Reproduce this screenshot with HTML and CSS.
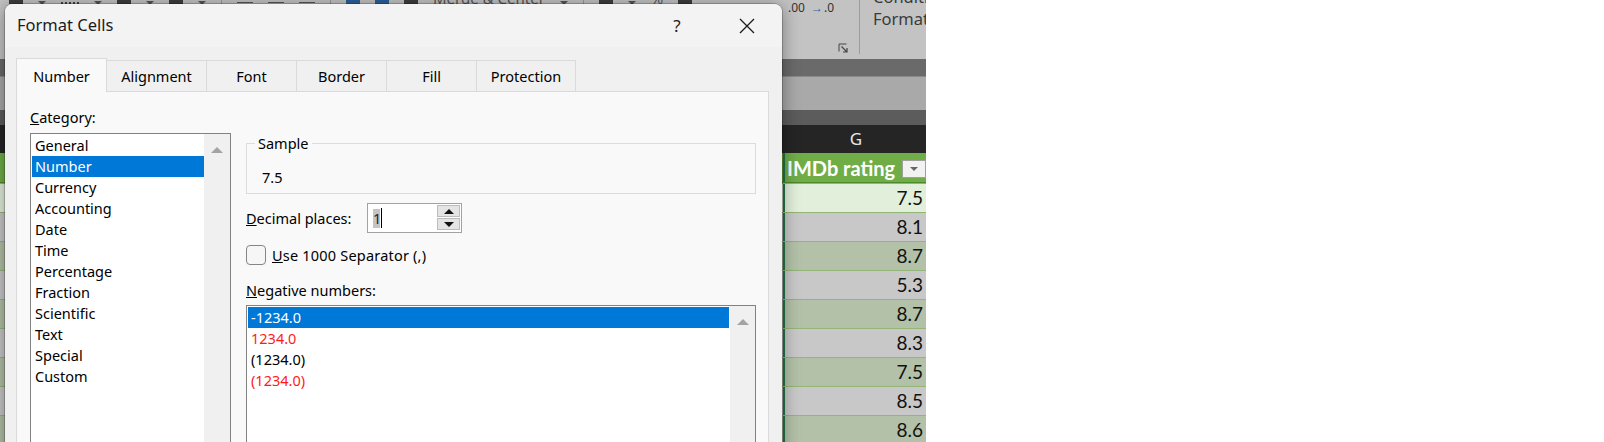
FILE: index.html
```html
<!DOCTYPE html>
<html lang="en">
<head>
    <meta charset="UTF-8">
    <meta name="viewport" content="width=device-width, initial-scale=1.0">
    <title>Format Cells</title>
    <link rel="stylesheet" href="styles.css">
</head>
<body>
    <div class="screen">
        <!-- excel window behind the dialog -->
        <div class="excel">
            <div class="ribbon">
                <div class="ribbon-strip">
                    <i class="bit"></i><i class="tri"></i>
                    <i class="bit dotted"></i><i class="tri"></i>
                    <i class="bit"></i><i class="tri"></i>
                    <i class="bit"></i><i class="tri"></i>
                    <i class="vsep"></i>
                    <i class="bit thin"></i><i class="bit thin"></i><i class="bit thin"></i>
                    <i class="vsep"></i>
                    <i class="bit blue"></i><i class="bit blue"></i>
                    <i class="bit"></i>
                    <span class="strip-text">Merge &amp; Center</span><i class="tri"></i>
                    <i class="vsep"></i>
                    <i class="bit"></i><i class="tri"></i>
                    <span class="strip-text">%</span>
                    <i class="bit"></i>
                </div>
                <div class="rb-number">
                    <div class="rb-dec"><span>.00</span><span class="rb-arrow">&#8594;</span><span>.0</span></div>
                    <svg class="rb-launcher" width="10" height="10" viewBox="0 0 10 10">
                        <path d="M1 8.5V1h7.5" fill="none" stroke="#444" stroke-width="1"/>
                        <path d="M3.5 3.5l5 5M9 5v4H5" fill="none" stroke="#444" stroke-width="1.2"/>
                    </svg>
                </div>
                <div class="rb-sep"></div>
                <div class="rb-cond">
                    <span>Conditional</span>
                    <span>Formatting</span>
                </div>
            </div>
            <div class="bar-dark"></div>
            <div class="formula-bar"></div>
            <div class="bar-mid"></div>
            <div class="col-heads">
                <span class="col-a"></span>
                <span class="col-g">G</span>
            </div>
            <div class="sheet">
                <div class="row head"><span class="a"></span><span class="g">IMDb rating<b class="filter"></b></span></div>
                <div class="row band active"><span class="a"></span><span class="g">7.5</span></div>
                <div class="row"><span class="a"></span><span class="g">8.1</span></div>
                <div class="row band"><span class="a"></span><span class="g">8.7</span></div>
                <div class="row"><span class="a"></span><span class="g">5.3</span></div>
                <div class="row band"><span class="a"></span><span class="g">8.7</span></div>
                <div class="row"><span class="a"></span><span class="g">8.3</span></div>
                <div class="row band"><span class="a"></span><span class="g">7.5</span></div>
                <div class="row"><span class="a"></span><span class="g">8.5</span></div>
                <div class="row band"><span class="a"></span><span class="g">8.6</span></div>
            </div>
        </div>

        <!-- Format Cells dialog -->
        <div class="dialog">
            <div class="titlebar">
                <span class="title">Format Cells</span>
                <span class="tb-btn help">?</span>
                <span class="tb-btn">
                    <svg width="16" height="16" viewBox="0 0 16 16">
                        <path d="M1 1L15 15M15 1L1 15" stroke="#1a1a1a" stroke-width="1.3" fill="none"/>
                    </svg>
                </span>
            </div>
            <div class="dlg-body">
                <div class="tabs">
                    <span class="tab tab-number active">Number</span>
                    <span class="tab tab-align">Alignment</span>
                    <span class="tab">Font</span>
                    <span class="tab">Border</span>
                    <span class="tab">Fill</span>
                    <span class="tab tab-protect">Protection</span>
                </div>
                <div class="panel">
                    <div class="col-left">
                        <div class="label"><u>C</u>ategory:</div>
                        <div class="listbox cat-list">
                            <ul class="items">
                                <li>General</li>
                                <li class="sel">Number</li>
                                <li>Currency</li>
                                <li>Accounting</li>
                                <li>Date</li>
                                <li>Time</li>
                                <li>Percentage</li>
                                <li>Fraction</li>
                                <li>Scientific</li>
                                <li>Text</li>
                                <li>Special</li>
                                <li>Custom</li>
                            </ul>
                            <div class="vscroll"><span class="arrow-up"></span></div>
                        </div>
                    </div>
                    <div class="col-right">
                        <fieldset class="sample">
                            <legend>Sample</legend>
                            <div class="sample-val">7.5</div>
                        </fieldset>
                        <div class="field-row">
                            <span class="dec-label"><u>D</u>ecimal places:</span>
                            <div class="spin">
                                <span class="spin-text"><span class="spin-sel">1</span><span class="caret"></span></span>
                                <span class="spin-btns">
                                    <span class="spin-btn"><i class="tri-up"></i></span>
                                    <span class="spin-btn"><i class="tri-down"></i></span>
                                </span>
                            </div>
                        </div>
                        <div class="check-row">
                            <span class="checkbox"></span>
                            <span class="check-label"><u>U</u>se 1000 Separator (,)</span>
                        </div>
                        <div class="label neg-label"><u>N</u>egative numbers:</div>
                        <div class="listbox neg-list">
                            <ul class="items">
                                <li class="sel">-1234.0</li>
                                <li class="red">1234.0</li>
                                <li>(1234.0)</li>
                                <li class="red">(1234.0)</li>
                            </ul>
                            <div class="vscroll"><span class="arrow-up"></span></div>
                        </div>
                    </div>
                </div>
            </div>
        </div>
    </div>
</body>
</html>
```

FILE: styles.css
```css
body {
    margin: 0;
    background-color: #fff;
    font-family: "Noto Sans", "Open Sans", sans-serif;
}
.screen {
    position: relative;
    width: 926px;
    height: 442px;
    overflow: hidden;
}
.excel {
    width: 926px;
}

/* ribbon */
.ribbon {
    display: flex;
    height: 59px;
    background-color: #c3c3c3;
    color: #3a3a3a;
    overflow: hidden;
}
.ribbon-strip {
    flex: 0 0 782px;
    display: flex;
    align-items: flex-start;
    gap: 15px;
    padding-left: 9px;
    box-sizing: border-box;
    overflow: hidden;
}
.bit {
    display: block;
    width: 14px;
    height: 4px;
    background-color: #3d3d3d;
}
.bit.dotted {
    width: 18px;
    background-color: transparent;
    border-bottom: 2px dotted #444;
    height: 2px;
}
.bit.thin {
    width: 16px;
    height: 1px;
    margin-top: 2px;
    background-color: #555;
}
.bit.blue {
    background-color: #2e5f9a;
}
.tri {
    display: block;
    width: 0;
    height: 0;
    margin-top: 1px;
    border-left: 4px solid transparent;
    border-right: 4px solid transparent;
    border-top: 4px solid #555;
}
.vsep {
    display: block;
    width: 1px;
    height: 6px;
    background-color: #999;
}
.strip-text {
    font-size: 15px;
    line-height: 15px;
    margin-top: -9px;
    color: #555;
    white-space: nowrap;
}
.rb-number {
    flex: 0 0 77px;
    display: flex;
    flex-direction: column;
    padding: 0 11px 0 6px;
    box-sizing: border-box;
}
.rb-dec {
    display: flex;
    gap: 6px;
    margin-top: 1px;
    font-size: 12px;
    line-height: 14px;
    color: #333;
}
.rb-arrow {
    color: #2c62a6;
    font-weight: bold;
    margin-right: -5px;
}
.rb-launcher {
    align-self: flex-end;
    margin-top: auto;
    margin-bottom: 6px;
}
.rb-sep {
    flex: 0 0 1px;
    height: 54px;
    background-color: #9b9b9b;
}
.rb-cond {
    display: flex;
    flex-direction: column;
    padding-left: 13px;
    margin-top: -14px;
    font-size: 16.5px;
    line-height: 22px;
    white-space: nowrap;
    color: #3a3a3a;
}

/* bars between ribbon and grid */
.bar-dark {
    height: 17px;
    background-color: #6a6a6a;
}
.formula-bar {
    height: 34px;
    background-color: #a9a9a9;
    border-top: 1px solid #8a8a8a;
    box-sizing: border-box;
}
.bar-mid {
    height: 15px;
    background-color: #5c5c5c;
}
.col-heads {
    display: grid;
    grid-template-columns: 783px 146px;
    height: 28px;
    background-color: #252525;
}
.col-g {
    text-align: center;
    color: #e8e8e8;
    font-size: 17px;
    line-height: 28px;
}

/* sheet rows */
.sheet {
    font-family: Lato, "Liberation Sans", sans-serif;
}
.row {
    display: grid;
    grid-template-columns: 783px 146px;
    height: 29px;
    box-sizing: border-box;
    border-top: 1px solid #93b578;
    background-color: #c8c8c8;
    color: #111;
    font-size: 19px;
}
.row.band {
    background-color: #b3c1a8;
}
.row.active {
    background-color: #e2efda;
}
.row .g {
    border-left: 2px solid #217346;
    padding-right: 6px;
    text-align: right;
    line-height: 28px;
}
.row.head {
    height: 30px;
    border-top: none;
    border-bottom: 1px solid #4f8a2f;
    background-color: #70ad47;
    color: #fff;
}
.row.head .g {
    display: flex;
    align-items: center;
    padding: 0 3px 0 2px;
    font-weight: bold;
    font-size: 20px;
}
.filter {
    margin-left: auto;
    width: 24px;
    height: 18px;
    margin-top: 2px;
    box-sizing: border-box;
    background-color: #f2f2f2;
    border: 1px solid #a0a0a0;
    display: flex;
    align-items: center;
    justify-content: center;
}
.filter::after {
    content: "";
    border-left: 4px solid transparent;
    border-right: 4px solid transparent;
    border-top: 4px solid #666;
}

/* dialog */
.dialog {
    position: absolute;
    left: 5px;
    top: 4px;
    width: 777px;
    height: 470px;
    background-color: #f0f0f0;
    border-radius: 8px 8px 0 0;
    box-shadow: 0 0 0 1px rgba(0,0,0,0.2), 0 2px 18px rgba(0,0,0,0.4);
    color: #000;
    font-size: 14.5px;
}
.titlebar {
    display: flex;
    align-items: center;
    height: 43px;
    background-color: #f3f3f3;
    border-radius: 8px 8px 0 0;
}
.title {
    flex: 1;
    padding-left: 12px;
    padding-bottom: 2px;
    font-size: 16.5px;
    color: #1b1b1b;
}
.tb-btn {
    width: 70px;
    height: 43px;
    display: flex;
    align-items: center;
    justify-content: center;
}
.help {
    font-size: 17px;
    color: #1b1b1b;
}
.dlg-body {
    padding: 11px 13px 0 11px;
}
.tabs {
    display: flex;
    align-items: flex-end;
    height: 33px;
}
.tab {
    width: 91px;
    height: 31px;
    margin-left: -1px;
    box-sizing: border-box;
    display: flex;
    align-items: center;
    justify-content: center;
    background-color: #f0f0f0;
    border: 1px solid #dadada;
    border-bottom: none;
}
.tab-number {
    width: 91px;
    margin-left: 0;
}
.tab-align {
    width: 101px;
}
.tab-protect {
    width: 100px;
}
.tab.active {
    height: 34px;
    margin-bottom: -1px;
    background-color: #f9f9f9;
    position: relative;
    z-index: 1;
}
.panel {
    display: grid;
    grid-template-columns: 201px 510px;
    gap: 15px;
    height: 360px;
    padding: 15px 12px 0 13px;
    background-color: #f9f9f9;
    border: 1px solid #dadada;
}
.label {
    line-height: 20px;
}
.listbox {
    display: grid;
    grid-template-columns: 1fr 26px;
    padding: 1px 0 0 1px;
    background-color: #fff;
    border: 1px solid #828282;
}
.cat-list {
    margin-top: 6px;
    height: 320px;
}
.items {
    list-style: none;
    margin: 0;
    padding: 0;
}
.items li {
    height: 21px;
    line-height: 21px;
    padding-left: 3px;
}
.items li.sel {
    background-color: #0078d7;
    color: #fff;
}
.items li.red {
    color: #ff1a1a;
}
.vscroll {
    background-color: #f0f0f0;
    display: flex;
    justify-content: center;
    margin-top: -1px;
}
.arrow-up {
    margin-top: 13px;
    width: 0;
    height: 0;
    border-left: 6px solid transparent;
    border-right: 6px solid transparent;
    border-bottom: 6px solid #a3a3a3;
}

/* right column */
.sample {
    margin: 26px 0 0;
    padding: 0 0 6px 8px;
    min-width: 0;
    border: 1px solid #dcdcdc;
}
.sample legend {
    padding: 0 3px;
    line-height: 20px;
}
.sample-val {
    margin: 14px 0 0 7px;
    line-height: 20px;
}
.field-row {
    display: flex;
    align-items: center;
    height: 30px;
    margin-top: 9px;
}
.dec-label {
    width: 121px;
}
.spin {
    display: flex;
    width: 95px;
    height: 30px;
    box-sizing: border-box;
    border: 1px solid #a2a2a2;
    background-color: #fff;
}
.spin-text {
    flex: 1;
    display: flex;
    align-items: center;
    padding-left: 5px;
}
.spin-sel {
    background-color: #c4c4c4;
    color: #222;
    width: 7px;
    line-height: 19px;
    overflow: hidden;
}
.caret {
    width: 1px;
    height: 20px;
    margin-left: 1px;
    background-color: #000;
}
.spin-btns {
    display: flex;
    flex-direction: column;
    gap: 1px;
    padding: 1px 1px 0 0;
}
.spin-btn {
    width: 23px;
    height: 12px;
    box-sizing: border-box;
    background-color: #e4e4e4;
    border: 1px solid #bcbcbc;
    display: flex;
    align-items: center;
    justify-content: center;
}
.tri-up {
    border-left: 5px solid transparent;
    border-right: 5px solid transparent;
    border-bottom: 5px solid #111;
}
.tri-down {
    border-left: 5px solid transparent;
    border-right: 5px solid transparent;
    border-top: 5px solid #111;
}
.check-row {
    display: flex;
    align-items: center;
    gap: 6px;
    height: 20px;
    margin-top: 12px;
}
.checkbox {
    width: 20px;
    height: 20px;
    box-sizing: border-box;
    border: 1px solid #858585;
    border-radius: 4px;
    background-color: #f6f6f6;
}
.check-label {
    letter-spacing: 0.2px;
}
.neg-label {
    margin-top: 15px;
}
.neg-list {
    grid-template-columns: 1fr 25px;
    column-gap: 1px;
    margin-top: 5px;
    height: 200px;
}
```
